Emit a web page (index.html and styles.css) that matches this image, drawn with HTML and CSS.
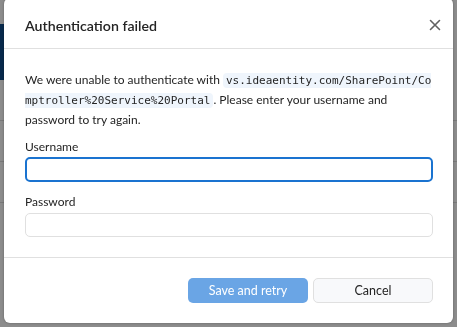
FILE: index.html
```html
<!DOCTYPE html>
<html lang="en">
<head>
    <meta charset="UTF-8">
    <meta name="viewport" content="width=device-width, initial-scale=1.0">
    <title>Authentication failed</title>
    <link rel="stylesheet" href="styles.css">
</head>
<body>
    <div class="page">
        <div class="page-bar"></div>
        <div class="page-row">nt</div>
        <div class="page-row">c</div>
        <div class="page-row">o</div>
    </div>

    <div class="overlay"></div>

    <div class="dialog" role="dialog" aria-labelledby="dialog-title">
        <div class="dialog-header">
            <h2 id="dialog-title">Authentication failed</h2>
            <button class="close-btn" aria-label="Close">
                <svg width="12" height="12" viewBox="0 0 12 12">
                    <path d="M1.5 1.5 L10.5 10.5 M10.5 1.5 L1.5 10.5" stroke="#616161" stroke-width="1.6" stroke-linecap="round"/>
                </svg>
            </button>
        </div>

        <div class="dialog-body">
            <p class="message">We were unable to authenticate with <code>vs.ideaentity.com/SharePoint/Comptroller%20Service%20Portal</code>. Please enter your username and password to try again.</p>

            <label class="field-label" for="username">Username</label>
            <input class="field-input focused" type="text" id="username" name="username">

            <label class="field-label" for="password">Password</label>
            <input class="field-input last" type="password" id="password" name="password">
        </div>

        <div class="dialog-footer">
            <button class="btn btn-primary" disabled>Save and retry</button>
            <button class="btn btn-secondary">Cancel</button>
        </div>
    </div>
</body>
</html>
```

FILE: styles.css
```css
body {
    margin: 0;
    padding: 0;
    font-family: Lato, "Noto Sans", sans-serif;
    background: #fff;
    height: 327px;
    overflow: hidden;
}

.page {
    padding-top: 24px;
    font-size: 13px;
    color: #333;
}
.page-bar {
    height: 56px;
    width: 120px;
    background-color: #0f4c8a;
}
.page-row {
    height: 40px;
    line-height: 40px;
    border-bottom: 1px solid #ddd;
    padding-left: 440px;
}

.overlay {
    position: fixed;
    top: 0;
    left: 0;
    right: 0;
    bottom: 0;
    background: rgba(0, 0, 0, 0.45);
}

.dialog {
    position: fixed;
    top: -2px;
    left: 4px;
    width: 449px;
    height: 325px;
    background: #fff;
    border-radius: 6px;
    box-shadow: 0 0 3px rgba(0, 0, 0, 0.3);
    display: flex;
    flex-direction: column;
    box-sizing: border-box;
}

.dialog-header {
    display: flex;
    justify-content: space-between;
    align-items: center;
    height: 51px;
    padding: 4px 12px 0 21px;
    border-bottom: 1px solid #e0e0e0;
    box-sizing: border-box;
}
.dialog-header h2 {
    margin: 0;
    font-size: 14.2px;
    font-weight: 600;
    color: #242424;
}
.close-btn {
    background: none;
    border: none;
    padding: 0;
    width: 12px;
    height: 12px;
    display: flex;
    cursor: pointer;
}

.dialog-body {
    padding: 21px 20px 20px 21px;
    display: flex;
    flex-direction: column;
    border-bottom: 1px solid #e0e0e0;
}
.message {
    margin: 0 0 10px;
    font-size: 12px;
    line-height: 19px;
    color: #242424;
}
.message code {
    font-family: "DejaVu Sans Mono", monospace;
    font-size: 11px;
    background: #eff5fc;
    padding: 1px 3px;
    border-radius: 4px;
    word-break: break-all;
}

.field-label {
    font-size: 12px;
    line-height: 16px;
    color: #242424;
    margin-bottom: 2px;
}
.field-input {
    height: 25px;
    border: 1px solid #e0e0e0;
    border-radius: 5px;
    box-sizing: border-box;
    margin: 0 0 12px;
    padding: 0 8px;
    font-family: inherit;
}
.field-input.focused {
    border: 2px solid #1a73d0;
}
.field-input.last {
    height: 24px;
    margin: 1px 0 0;
}

.dialog-footer {
    flex: 1;
    display: flex;
    justify-content: flex-end;
    align-items: center;
    gap: 5px;
    padding: 0 20px 0 0;
}
.btn {
    width: 120px;
    height: 25px;
    border-radius: 5px;
    font-family: inherit;
    font-size: 12.5px;
    cursor: pointer;
}
.btn-primary {
    background: #6aa5e5;
    color: #fff;
    border: none;
}
.btn-secondary {
    background: #f8f9fb;
    color: #242424;
    border: 1px solid #e0e0e0;
}
```
